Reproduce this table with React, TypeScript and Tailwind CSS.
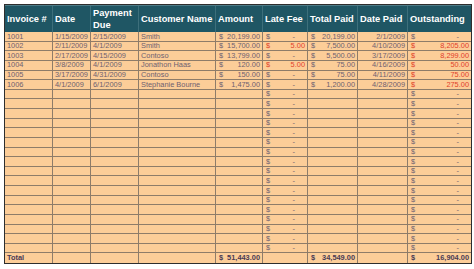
import React from "react";

type Row = {
  inv: string;
  date: string;
  due: string;
  name: string;
  amount: string;
  fee: string;
  paid: string;
  datePaid: string;
  out: string;
};

const rows: Row[] = [
  { inv: "1001", date: "1/15/2009", due: "2/15/2009", name: "Smith", amount: "20,199.00", fee: "", paid: "20,199.00", datePaid: "2/1/2009", out: "" },
  { inv: "1002", date: "2/11/2009", due: "4/1/2009", name: "Smith", amount: "15,700.00", fee: "5.00", paid: "7,500.00", datePaid: "4/10/2009", out: "8,205.00" },
  { inv: "1003", date: "2/17/2009", due: "4/15/2009", name: "Contoso", amount: "13,799.00", fee: "", paid: "5,500.00", datePaid: "3/17/2009", out: "8,299.00" },
  { inv: "1004", date: "3/8/2009", due: "4/1/2009", name: "Jonathon Haas", amount: "120.00", fee: "5.00", paid: "75.00", datePaid: "4/16/2009", out: "50.00" },
  { inv: "1005", date: "3/17/2009", due: "4/31/2009", name: "Contoso", amount: "150.00", fee: "", paid: "75.00", datePaid: "4/11/2009", out: "75.00" },
  { inv: "1006", date: "4/1/2009", due: "6/1/2009", name: "Stephanie Bourne", amount: "1,475.00", fee: "", paid: "1,200.00", datePaid: "4/28/2009", out: "275.00" },
];

const EMPTY_ROWS = 17;

const line = "border-[#8e7c69]";
const cell = `border-r border-b ${line} px-[2px] flex items-center overflow-hidden whitespace-nowrap`;
const lastCell = `border-b ${line} px-[2px] flex items-center overflow-hidden whitespace-nowrap`;

function Money({ value, red, bold }: { value: string; red?: boolean; bold?: boolean }) {
  const color = red ? "text-[#e2412a]" : bold ? "text-[#4a3a55]" : "";
  return (
    <div className={`flex w-full items-center justify-between ${color}`}>
      <span className="pl-[1px]">$</span>
      {value ? <span>{value}</span> : <span className="pr-[10px]">-</span>}
    </div>
  );
}

function Header({ children, last }: { children: React.ReactNode; last?: boolean }) {
  return (
    <div
      className={`flex items-center whitespace-nowrap px-[2px] text-[9.3px] font-bold leading-[12px] text-white ${
        last ? "" : "border-r border-[#3d6f7b]"
      }`}
    >
      {children}
    </div>
  );
}

export default function App() {
  return (
    <div className="h-[269px] w-[474px] bg-white pl-[4px] pt-[4px]">
      <div
        className="grid h-[260px] w-[468px] grid-cols-[48px_38px_48px_77px_47px_45px_50px_50px_minmax(0,1fr)] grid-rows-[27px_repeat(24,minmax(0,1fr))] border-[1.5px] border-[#2e2e2e] bg-[#fccd98] text-[7.4px] leading-none text-[#6e5f70]"
        style={{ fontFamily: '"Liberation Sans", Arial, sans-serif' }}
      >
        <div className="col-span-9 grid grid-cols-subgrid border-t border-[#4d7c88] bg-[#1f5664]">
          <Header>Invoice #</Header>
          <Header>Date</Header>
          <Header>
            <span>
              Payment
              <br />
              Due
            </span>
          </Header>
          <Header>Customer Name</Header>
          <Header>Amount</Header>
          <Header>Late Fee</Header>
          <Header>Total Paid</Header>
          <Header>Date Paid</Header>
          <Header last>Outstanding</Header>
        </div>

        {rows.map((r) => (
          <React.Fragment key={r.inv}>
            <div className={cell}>{r.inv}</div>
            <div className={cell}>{r.date}</div>
            <div className={cell}>{r.due}</div>
            <div className={cell}>{r.name}</div>
            <div className={cell}>
              <Money value={r.amount} />
            </div>
            <div className={cell}>
              <Money value={r.fee} red={!!r.fee} />
            </div>
            <div className={cell}>
              <Money value={r.paid} />
            </div>
            <div className={`${cell} justify-end`}>{r.datePaid}</div>
            <div className={lastCell}>
              <Money value={r.out} red={!!r.out} />
            </div>
          </React.Fragment>
        ))}

        {Array.from({ length: EMPTY_ROWS }).map((_, i) => (
          <React.Fragment key={i}>
            <div className={cell} />
            <div className={cell} />
            <div className={cell} />
            <div className={cell} />
            <div className={cell} />
            <div className={cell}>
              <Money value="" />
            </div>
            <div className={cell} />
            <div className={cell} />
            <div className={lastCell}>
              <Money value="" />
            </div>
          </React.Fragment>
        ))}

        <div className="col-span-9 grid grid-cols-subgrid font-bold text-[#4a3a55]">
          <div className={`flex items-center border-r ${line} px-[2px]`}>Total</div>
          <div className={`border-r ${line}`} />
          <div className={`border-r ${line}`} />
          <div className={`border-r ${line}`} />
          <div className={`flex items-center border-r ${line} px-[2px]`}>
            <Money value="51,443.00" bold />
          </div>
          <div className={`border-r ${line}`} />
          <div className={`flex items-center border-r ${line} px-[2px]`}>
            <Money value="34,549.00" bold />
          </div>
          <div className={`border-r ${line}`} />
          <div className="flex items-center px-[2px]">
            <Money value="16,904.00" bold />
          </div>
        </div>
      </div>
    </div>
  );
}
